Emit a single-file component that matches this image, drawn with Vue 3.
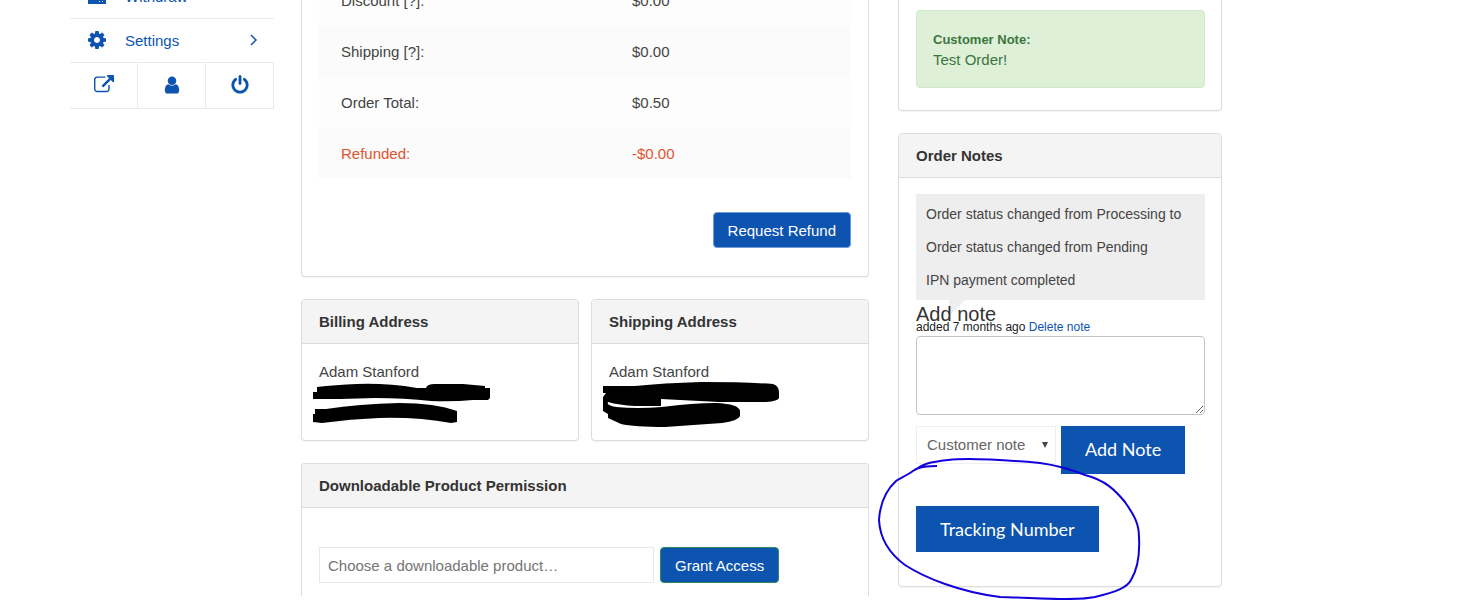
<template>
    <div class="page">
        <div class="layout">
            <nav class="sidebar">
                <a href="#" class="menu-item">
                    <svg class="menu-icon" viewBox="0 0 18 18">
                        <path d="M2 3h13v3h3v11H0V5z" />
                        <path d="M11 14h1v1h-1zM14 14h1v1h-1z" fill="#fff" />
                    </svg>
                    <span>Withdraw</span>
                </a>
                <a href="#" class="menu-item">
                    <svg class="menu-icon" viewBox="128 128 1536 1536"><path :d="icons.cog" /></svg>
                    <span>Settings</span>
                    <svg class="chevron" viewBox="0 0 8 12"><path d="M1 1l5 5-5 5" /></svg>
                </a>
                <div class="shortcuts">
                    <a href="#" aria-label="Visit store"><svg viewBox="0 0 1792 1792"><path :d="icons.external" /></svg></a>
                    <a href="#" aria-label="Edit account"><svg viewBox="0 0 1792 1792"><path :d="icons.user" /></svg></a>
                    <a href="#" aria-label="Log out"><svg viewBox="0 0 1792 1792"><path :d="icons.power" /></svg></a>
                </div>
            </nav>

            <main class="main">
                <section class="card totals">
                    <table>
                        <tbody>
                            <tr v-for="row in totals" :key="row.label" :class="{ refunded: row.refunded }">
                                <th scope="row">{{ row.label }}</th>
                                <td>{{ row.value }}</td>
                            </tr>
                        </tbody>
                    </table>
                    <button type="button" class="btn refund">Request Refund</button>
                </section>

                <div class="addresses">
                    <section class="card">
                        <h2>Billing Address</h2>
                        <div class="address">
                            <p>{{ customer }}</p>
                            <svg class="scribble" viewBox="0 0 180 50">
                                <path d="M4 7Q22 5 44 4Q74 3 104 8H113Q114 4 122 4H150L172 6V8H177V18L175 20H160Q140 22 118 21Q92 18 62 18L27 19H0V12H4z" />
                                <path d="M2 29H13Q46 24 86 23Q122 23 144 31V42L138 43Q105 37 66 38Q38 39 9 43L0 42V34H2z" />
                            </svg>
                        </div>
                    </section>
                    <section class="card">
                        <h2>Shipping Address</h2>
                        <div class="address">
                            <p>{{ customer }}</p>
                            <svg class="scribble" viewBox="0 0 180 50">
                                <path d="M0 6H32Q60 3 98 2Q140 2 170 4Q176 6 176 12V18Q175 21 163 22H116L58 19V26H32Q16 25 5 22Q3 25 13 27Q34 29 59 27Q90 23 113 23Q136 24 137 31V36Q135 41 119 43L62 47Q31 47 18 44L5 38V34L0 31V17L3 13H0z" />
                            </svg>
                        </div>
                    </section>
                </div>

                <section class="card downloads">
                    <h2>Downloadable Product Permission</h2>
                    <div class="grant">
                        <input v-model="product" type="text" aria-label="Downloadable product" placeholder="Choose a downloadable product…">
                        <button type="button" class="btn grant-btn">Grant Access</button>
                    </div>
                </section>
            </main>

            <aside class="side">
                <section class="card customer">
                    <div class="alert">
                        <strong>Customer Note:</strong>
                        <p>Test Order!</p>
                    </div>
                </section>

                <section class="card notes">
                    <h2>Order Notes</h2>
                    <div class="notes-body">
                        <div class="note">
                            <p v-for="line in noteLines" :key="line">{{ line }}</p>
                        </div>
                        <h4><label for="note">Add note</label></h4>
                        <p class="meta">added 7 months ago <a href="#">Delete note</a></p>
                        <textarea id="note" v-model="note"></textarea>
                        <div class="note-actions">
                            <div class="select-wrap">
                                <select v-model="noteType" aria-label="Note type">
                                    <option value="customer">Customer note</option>
                                    <option value="private">Private note</option>
                                </select>
                                <span class="caret"></span>
                            </div>
                            <button type="button" class="big-btn add">Add Note</button>
                        </div>
                        <button type="button" class="big-btn tracking">Tracking Number</button>
                    </div>
                    <svg class="circle" viewBox="878 458 264 142">
                        <path d="M937 466C928 466 920 467 916 469C905 477 900 478 896 481C884 492 880 505 879 520C880 540 890 554 905 565C925 578 960 592 1000 597C1040 598 1075 601 1095 597C1115 592 1127 588 1131 580C1137 570 1140 555 1139 537C1139 520 1130 510 1125 502C1115 490 1105 480 1085 475C1070 469 1055 465 1040 463C1005 460 965 458 948 460C930 462 922 464 915 470" />
                    </svg>
                </section>
            </aside>
        </div>
    </div>
</template>

<script setup>
import { ref } from 'vue';

const customer = 'Adam Stanford';
const product = ref('');
const note = ref('');
const noteType = ref('customer');

const totals = [
    { label: 'Discount [?]:', value: '$0.00' },
    { label: 'Shipping [?]:', value: '$0.00' },
    { label: 'Order Total:', value: '$0.50' },
    { label: 'Refunded:', value: '-$0.00', refunded: true },
];

const noteLines = [
    'Order status changed from Processing to',
    'Order status changed from Pending',
    'IPN payment completed',
];

const icons = {
    cog: 'M1152 896q0-106-75-181t-181-75-181 75-75 181 75 181 181 75 181-75 75-181zm512-109v222q0 12-8 23t-20 13l-185 28q-19 54-39 91 35 50 107 138 10 12 10 25t-9 23q-27 37-99 108t-94 71q-12 0-26-9l-138-108q-44 23-91 38-16 136-29 186-7 28-36 28h-222q-14 0-24.5-8.5t-11.5-21.5l-28-184q-49-16-90-37l-141 107q-10 9-25 9-14 0-25-11-126-114-165-168-7-10-7-23 0-12 8-23 15-21 51-66.5t54-70.5q-27-50-41-99l-183-27q-13-2-21-12.5t-8-23.5v-222q0-12 8-23t19-13l186-28q14-46 39-92-40-57-107-138-10-12-10-24 0-10 9-23 26-36 98.5-107.5t94.5-71.5q13 0 26 10l138 107q44-23 91-38 16-136 29-186 7-28 36-28h222q14 0 24.5 8.5t11.5 21.5l28 184q49 16 90 37l142-107q9-9 24-9 13 0 25 10 129 119 165 170 7 8 7 22 0 12-8 23-15 21-51 66.5t-54 70.5q26 50 41 98l183 28q13 2 21 12.5t8 23.5z',
    external: 'M1408 928v320q0 119-84.5 203.5t-203.5 84.5h-832q-119 0-203.5-84.5t-84.5-203.5v-832q0-119 84.5-203.5t203.5-84.5h704q14 0 23 9t9 23v64q0 14-9 23t-23 9h-704q-66 0-113 47t-47 113v832q0 66 47 113t113 47h832q66 0 113-47t47-113v-320q0-14 9-23t23-9h64q14 0 23 9t9 23zm384-864v512q0 26-19 45t-45 19-45-19l-176-176-652 652q-10 10-23 10t-23-10l-114-114q-10-10-10-23t10-23l652-652-176-176q-19-19-19-45t19-45 45-19h512q26 0 45 19t19 45z',
    user: 'M1536 1399q0 109-62.5 187t-150.5 78h-854q-88 0-150.5-78t-62.5-187q0-85 8.5-160.5t31.5-152 58.5-131 94-89 134.5-34.5q131 128 313 128t313-128q76 0 134.5 34.5t94 89 58.5 131 31.5 152 8.5 160.5zm-256-887q0 159-112.5 271.5t-271.5 112.5-271.5-112.5-112.5-271.5 112.5-271.5 271.5-112.5 271.5 112.5 112.5 271.5z',
    power: 'M1664 896q0 156-61 298t-164 245-245 164-298 61-298-61-245-164-164-245-61-298q0-182 80.5-343t226.5-270q43-32 95.5-25t83.5 50q32 42 24.5 94.5t-49.5 84.5q-98 74-151.5 181t-53.5 228q0 104 40.5 198.5t109.5 163.5 163.5 109.5 198.5 40.5 198.5-40.5 163.5-109.5 109.5-163.5 40.5-198.5q0-121-53.5-228t-151.5-181q-42-32-49.5-84.5t24.5-94.5q31-43 84-50t95 25q146 109 226.5 270t80.5 343zm-640-768v640q0 52-38 90t-90 38-90-38-38-90v-640q0-52 38-90t90-38 90 38 38 90z',
};
</script>

<style>
body {
    background: #fff;
}
</style>

<style scoped>
.page {
    overflow: hidden;
    font-family: "Liberation Sans", Arial, sans-serif;
    font-size: 15px;
    line-height: 20px;
    color: #444;
}

.page * {
    box-sizing: border-box;
}

p, h2, h4 {
    margin: 0;
}

a {
    color: #0d53b0;
    text-decoration: none;
}

button, input, select, textarea {
    font-family: inherit;
    margin: 0;
}

/* the page is scrolled partway into its first rows */
.layout {
    display: grid;
    grid-template-columns: 204fr 624fr 324fr;
    align-items: start;
    margin-top: -25px;
    padding: 0 245px 0 70px;
}

.menu-item {
    display: flex;
    align-items: center;
    height: 44px;
    padding: 0 16px 0 18px;
    border-bottom: 1px solid #eaeaea;
}

.menu-icon {
    width: 18px;
    height: 18px;
    margin: 0 19px 2px 0;
    fill: #0d53b0;
}

.chevron {
    width: 8px;
    height: 12px;
    margin: 0 0 2px auto;
    fill: none;
    stroke: #0d53b0;
    stroke-width: 1.5;
}

.shortcuts {
    display: grid;
    grid-template-columns: repeat(3, 1fr);
    height: 46px;
    border-bottom: 1px solid #eaeaea;
}

.shortcuts a {
    display: flex;
    align-items: center;
    justify-content: center;
    padding-bottom: 2px;
    border-right: 1px solid #eaeaea;
}

.shortcuts svg {
    width: 20px;
    height: 20px;
    fill: #0d53b0;
}

.main {
    margin: 0 29px 0 27px;
}

.card {
    background: #fff;
    border: 1px solid #ddd;
    border-radius: 4px;
    box-shadow: 0 1px 1px rgba(0, 0, 0, 0.05);
}

.card h2 {
    padding: 12px 17px 11px;
    font-size: 15px;
    line-height: 20px;
    color: #333;
    background: #f4f4f4;
    border-bottom: 1px solid #ddd;
    border-radius: 3px 3px 0 0;
}

.totals {
    display: flex;
    flex-direction: column;
    padding: 0 17px 28px;
    border-top: 0;
    border-radius: 0 0 4px 4px;
}

table {
    width: 100%;
    border-collapse: collapse;
    table-layout: fixed;
}

tr {
    height: 51px;
    background: #fdfdfd;
}

tr:nth-child(even) {
    background: #fbfbfb;
}

th, td {
    padding: 0 22px;
    font-weight: normal;
    text-align: left;
}

th {
    width: 291px;
}

.refunded {
    color: #e0532f;
}

.btn {
    height: 36px;
    padding: 0 14px;
    font-size: 15px;
    color: #fff;
    background: #0d53b0;
    border: 1px solid #6f9bd6;
    border-radius: 4px;
}

.refund {
    align-self: flex-end;
    margin-top: 33px;
}

.addresses {
    display: grid;
    grid-template-columns: 1fr 1fr;
    gap: 12px;
    margin: 22px 0;
}

.address {
    padding: 18px 17px 10px;
}

.scribble {
    display: block;
    width: 180px;
    height: 50px;
    margin: -2px 0 0 -6px;
}

.downloads {
    border-bottom: 0;
    border-radius: 4px 4px 0 0;
    box-shadow: none;
}

.grant {
    display: flex;
    gap: 6px;
    padding: 39px 17px 13px;
}

.grant input {
    flex: 0 1 335px;
    min-width: 0;
    height: 36px;
    padding: 0 8px;
    font-size: 15px;
    color: #444;
    background: #fff;
    border: 1px solid #e8e8e8;
}

.grant input::placeholder {
    color: #757575;
}

.grant-btn {
    border-color: #2f8a5b;
}

.customer {
    padding: 35px 16px 22px 17px;
    border-top: 0;
    border-radius: 0 0 4px 4px;
}

.alert {
    padding: 19px 16px 17px;
    color: #3c763d;
    background: #dff0d8;
    border: 1px solid #d0e9c6;
    border-radius: 4px;
}

.alert strong {
    display: block;
    font-size: 13px;
}

.notes {
    position: relative;
    margin: 22px 0 13px;
}

.notes-body {
    padding: 16px 16px 34px 17px;
}

.note {
    position: relative;
    padding: 10px;
    font-size: 14px;
    background: #eee;
}

.note p + p {
    margin-top: 13px;
}

.note::after {
    content: "";
    position: absolute;
    top: 100%;
    left: 33px;
    border-top: 16px solid #eee;
    border-right: 16px solid transparent;
}

.note-actions {
    display: flex;
    gap: 5px;
    align-items: flex-start;
    margin-top: 11px;
}

h4 {
    position: relative;
    margin-top: 7px;
    font-size: 20px;
    font-weight: normal;
    line-height: 14px;
    color: #333;
}

.meta {
    position: relative;
    font-size: 12px;
    line-height: 12px;
    color: #222;
}

textarea {
    display: block;
    width: 100%;
    height: 79px;
    margin-top: 3px;
    padding: 8px;
    font-size: 14px;
    background: #fff;
    border: 1px solid #c4c4c4;
    border-radius: 4px;
}

.select-wrap {
    position: relative;
    flex: 0 1 140px;
}

select {
    width: 100%;
    height: 38px;
    padding: 0 10px 2px;
    font-size: 15px;
    color: #666;
    background: #fff;
    border: 1px solid #eee;
    border-radius: 0;
    appearance: none;
}

.caret {
    position: absolute;
    top: 16px;
    right: 8px;
    border-top: 6px solid #444;
    border-right: 3px solid transparent;
    border-left: 3px solid transparent;
    pointer-events: none;
}

.big-btn {
    padding: 0 24px;
    font-family: Lato, sans-serif;
    font-size: 18px;
    color: #fff;
    background: #0d53b0;
    border: 0;
}

.add {
    height: 48px;
    padding-bottom: 2px;
}

.tracking {
    display: block;
    height: 46px;
    margin-top: 32px;
}

.circle {
    position: absolute;
    top: 324px;
    left: -21px;
    width: 264px;
    height: 142px;
    fill: none;
    stroke: #1200dc;
    stroke-width: 2;
    pointer-events: none;
}
</style>
